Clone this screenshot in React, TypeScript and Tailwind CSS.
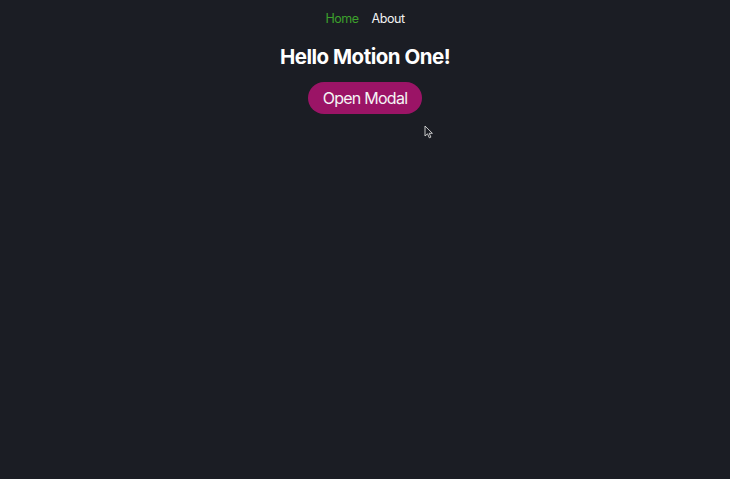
import React from 'react';

const Nav: React.FC = () => (
  <nav className="flex justify-center gap-[13px] pt-[10px] text-[12.5px] leading-[18px] tracking-[-0.45px]">
    <a href="#" className="text-[#3da02c]">Home</a>
    <a href="#" className="text-[#f2f2f2]">About</a>
  </nav>
);

// small arrow pointer drawn over the page
const Pointer: React.FC = () => (
  <svg className="absolute left-[424px] top-[125px]" width="10" height="14" viewBox="0 0 10 14">
    <path d="M1 1 L1 11 L3.5 8.8 L5.3 12.8 L6.9 12.1 L5.2 8.3 L8.4 8.3 Z" fill="#1b1d24" stroke="#d8d8d8" strokeWidth="0.9" strokeLinejoin="round" />
  </svg>
);

export default function App() {
  return (
    <div className="relative min-h-[479px] bg-[#1b1d24] font-['Inter',sans-serif] text-white">
      <Nav />
      <main className="flex flex-col items-center">
        <h1 className="mt-[15px] text-[20.5px] font-bold leading-[27px] tracking-[-0.5px]">Hello Motion One!</h1>
        <button className="mt-[12px] h-[32px] w-[114px] rounded-full bg-[#9b1466] text-[16px] tracking-[-0.75px] text-[#f5f5f5]">
          Open Modal
        </button>
      </main>
      <Pointer />
    </div>
  );
}
